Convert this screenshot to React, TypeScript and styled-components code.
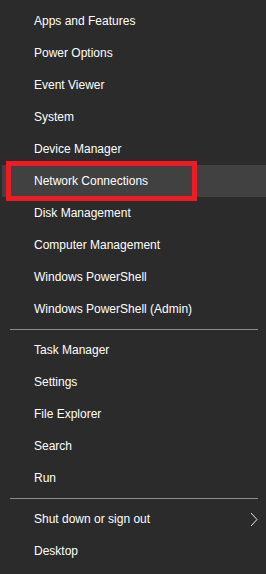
import React from "react";
import styled, { createGlobalStyle } from "styled-components";

const GlobalStyle = createGlobalStyle`
  html, body {
    margin: 0;
    padding: 0;
    background: #2b2b2b;
  }
`;

const Menu = styled.div`
  width: 266px;
  height: 574px;
  box-sizing: border-box;
  padding: 5px 0 0 2px;
  background: #2b2b2b;
  font-family: "Segoe UI", "Liberation Sans", Arial, sans-serif;
  font-size: 12px;
  color: #ffffff;
  display: flex;
  flex-direction: column;
`;

const Item = styled.div<{ $hover?: boolean }>`
  position: relative;
  height: 32px;
  display: flex;
  align-items: center;
  justify-content: space-between;
  padding: 0 8px 0 32px;
  background: ${(p) => (p.$hover ? "#414141" : "transparent")};
`;

const Label = styled.span`
  line-height: 16px;
`;

const Marker = styled.div`
  position: absolute;
  left: 4px;
  top: -4px;
  width: 191px;
  height: 40px;
  box-sizing: border-box;
  border: 5px solid #ed1c24;
`;

const Separator = styled.div`
  height: 1px;
  margin: 4px 8px 4px 8px;
  background: #8c8c8c;
`;

const Chevron = () => (
  <svg width="8" height="15" viewBox="0 0 8 15">
    <path d="M1 1 L7 7.5 L1 14" fill="none" stroke="#e6e6e6" strokeWidth="1" />
  </svg>
);

type Entry = { label: string; hover?: boolean; sub?: boolean };

const groups: Entry[][] = [
  [
    { label: "Apps and Features" },
    { label: "Power Options" },
    { label: "Event Viewer" },
    { label: "System" },
    { label: "Device Manager" },
    { label: "Network Connections", hover: true },
    { label: "Disk Management" },
    { label: "Computer Management" },
    { label: "Windows PowerShell" },
    { label: "Windows PowerShell (Admin)" },
  ],
  [
    { label: "Task Manager" },
    { label: "Settings" },
    { label: "File Explorer" },
    { label: "Search" },
    { label: "Run" },
  ],
  [{ label: "Shut down or sign out", sub: true }, { label: "Desktop" }],
];

export default function App() {
  return (
    <>
      <GlobalStyle />
      <Menu>
        {groups.map((group, i) => (
          <React.Fragment key={i}>
            {i > 0 && <Separator />}
            {group.map((e) => (
              <Item key={e.label} $hover={e.hover}>
                <Label>{e.label}</Label>
                {e.sub && <Chevron />}
                {e.hover && <Marker />}
              </Item>
            ))}
          </React.Fragment>
        ))}
      </Menu>
    </>
  );
}
